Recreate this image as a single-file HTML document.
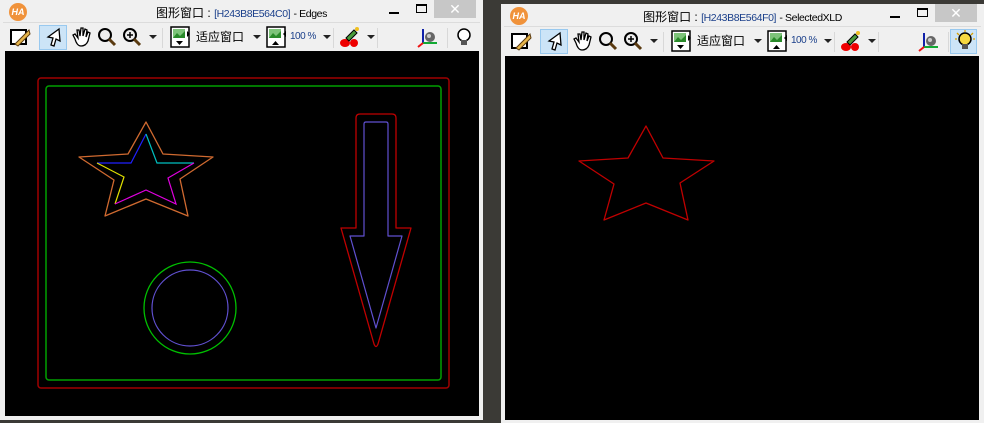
<!DOCTYPE html>
<html><head><meta charset="utf-8"><style>
*{margin:0;padding:0;box-sizing:border-box}
body{width:984px;height:423px;background:#3b3a36;position:relative;overflow:hidden;font-family:"Liberation Sans","Noto Sans CJK SC",sans-serif}
.win{position:absolute;width:483px;height:420px;background:#f0f0f0}
.title{position:absolute;left:0;top:0;width:483px;height:22px;background:#f0f0f0}
.logo{position:absolute;left:9px;top:3px;width:18px;height:18px;border-radius:50%;background:#f0923a;color:#fff;font:bold 9px "Liberation Sans",sans-serif;text-align:center;line-height:18px;font-style:italic}
.ttext{position:absolute;left:0;width:483px;top:4px;text-align:center;font-size:12px;color:#000;white-space:nowrap}
.ttext .c{font-family:"Noto Sans CJK SC",sans-serif}
.ttext .h{color:#1a3f8a;font-size:10.5px;letter-spacing:-0.4px}
.ttext .e{font-size:10.5px;letter-spacing:-0.4px}
.min{position:absolute;left:389px;top:12px;width:10px;height:2px;background:#000}
.max{position:absolute;left:416px;top:4px;width:11px;height:9px;border:1px solid #000;border-top-width:2px}
.close{position:absolute;left:434px;top:0;width:42px;height:18px;background:#c7c7c7;color:#fff;text-align:center;font-size:14px;line-height:18px}
.tb{position:absolute;left:3px;top:22px;width:477px;height:29px;background:#f0f0f0;border-top:1px solid #dcdcdc}
.ic{position:absolute;top:3px}
.sep{position:absolute;top:5px;width:1px;height:20px;background:#d8d8d8}
.dd{position:absolute;top:12px;width:0;height:0;border-left:4px solid transparent;border-right:4px solid transparent;border-top:4px solid #222}
.sel{position:absolute;left:36px;top:2px;width:28px;height:25px;background:#cce4f7;border:1px solid #99c9ef}
.txt{position:absolute;top:6px;font-size:12px;font-family:"Noto Sans CJK SC",sans-serif;line-height:16px}
.pct{position:absolute;top:8px;font-size:10px;letter-spacing:-0.5px;color:#1a3f8a}
.canvas{position:absolute;left:5px;top:51px;width:474px;height:365px;background:#000}
</style></head><body>

<!-- LEFT WINDOW -->
<div class="win" style="left:0;top:0">
 <div class="title">
  <div class="logo">HA</div>
  <div class="ttext"><span class="c">图形窗口</span> : <span class="h">[H243B8E564C0]</span> <span class="e">- Edges</span></div>
  <div class="min"></div><div class="max"></div><div class="close">✕</div>
 </div>
 <div class="tb">
  <svg class="ic" style="left:6px" width="22" height="22" viewBox="0 0 22 22"><rect x="2" y="4" width="15" height="14" fill="#fff" stroke="#000" stroke-width="2"/><path d="M6 18 L20 4 L21 8 L9 20Z" fill="#e8b64a" stroke="#5a3a10"/></svg>
  <div class="sel"></div>
  <svg class="ic" style="left:40px" width="22" height="22" viewBox="0 0 22 22"><path d="M16 3 L5 11 L10 12 L8 19 L11 20 L13 13 L17 15Z" fill="#fff" stroke="#000" stroke-width="1.3"/></svg>
  <svg class="ic" style="left:67px" width="22" height="22" viewBox="0 0 22 22"><path d="M5 13 L3 9 L5 8 L8 12 L7 4 L9 4 L10 10 L11 2 L13 2 L13 10 L15 3 L17 4 L16 11 L18 6 L20 7 L18 15 Q16 20 11 20 Q7 20 5 13Z" fill="#fff" stroke="#000" stroke-width="1.3"/></svg>
  <svg class="ic" style="left:93px" width="22" height="22" viewBox="0 0 22 22"><circle cx="9" cy="9" r="6" fill="#eee" stroke="#000" stroke-width="2"/><path d="M13 13 L19 19" stroke="#5a3a10" stroke-width="3"/></svg>
  <svg class="ic" style="left:118px" width="22" height="22" viewBox="0 0 22 22"><circle cx="9" cy="9" r="6" fill="#eee" stroke="#000" stroke-width="2"/><path d="M6 9H12M9 6V12" stroke="#000" stroke-width="1.5"/><path d="M13 13 L19 19" stroke="#5a3a10" stroke-width="3"/></svg>
  <div class="dd" style="left:146px"></div>
  <div class="sep" style="left:159px"></div>
  <svg class="ic" style="left:167px" width="22" height="22" viewBox="0 0 22 22"><rect x="1" y="1" width="18" height="20" fill="#fff" stroke="#000" stroke-width="1.5"/><rect x="3" y="3" width="12" height="9" fill="#7ec37a"/><path d="M3 12 L7 7 L10 10 L15 5 V12Z" fill="#2a8a2a"/><path d="M17 5 L20 8 L17 11Z" fill="#000"/><path d="M6 15 H13 L9.5 19Z" fill="#000"/></svg>
  <div class="txt" style="left:193px">适应窗口</div>
  <div class="dd" style="left:250px"></div>
  <svg class="ic" style="left:263px" width="22" height="22" viewBox="0 0 22 22"><rect x="1" y="1" width="18" height="20" fill="#fff" stroke="#000" stroke-width="1.5"/><rect x="3" y="3" width="12" height="9" fill="#7ec37a"/><path d="M3 12 L7 7 L10 10 L15 5 V12Z" fill="#2a8a2a"/><path d="M20 5 L17 8 L20 11Z" fill="#000"/><path d="M6 19 H13 L9.5 15Z" fill="#000"/></svg>
  <div class="pct" style="left:287px">100 %</div>
  <div class="dd" style="left:320px"></div>
  <div class="sep" style="left:330px"></div>
  <svg class="ic" style="left:336px" width="22" height="22" viewBox="0 0 22 22"><ellipse cx="6" cy="17" rx="5" ry="4" fill="#e00"/><ellipse cx="15" cy="17" rx="4" ry="4" fill="#e00"/><path d="M7 12 L15 4 L18 7 L10 15Z" fill="#4a9a3a" stroke="#000"/><circle cx="18" cy="3" r="2" fill="#f0c020"/></svg>
  <div class="dd" style="left:364px"></div>
  <div class="sep" style="left:374px"></div>
  <svg class="ic" style="left:414px" width="24" height="22" viewBox="0 0 24 22"><path d="M6 17 V3" stroke="#12a" stroke-width="2"/><path d="M6 17 L20 17" stroke="#1a3" stroke-width="2"/><path d="M6 17 L1 21" stroke="#e11" stroke-width="2"/><circle cx="13" cy="11" r="5" fill="#666"/><circle cx="12" cy="10" r="2" fill="#ccc"/></svg>
  <div class="sep" style="left:444px"></div>
  <svg class="ic" style="left:450px" width="22" height="22" viewBox="0 0 22 22"><circle cx="11" cy="9" r="6" fill="#fff" stroke="#000" stroke-width="1.5"/><rect x="8" y="14" width="6" height="5" fill="#555"/></svg>
 </div>
 <div class="canvas">
  <svg width="474" height="365" viewBox="5 51 474 365" style="display:block">
   <rect x="38" y="78" width="411" height="310" rx="3" fill="none" stroke="#a00000" stroke-width="1.5"/>
   <rect x="46" y="86" width="395" height="294" rx="3" fill="none" stroke="#00a000" stroke-width="1.5"/>
   <path d="M146 122 L163 154 L213 157 L180 179 L188 216 L146 199 L105 216 L114 180 L79 157 L128 154Z" fill="none" stroke="#d06a30" stroke-width="1.3" stroke-linejoin="round"/>
   <path d="M146 134 L131 163 L97 163" fill="none" stroke="#2020ff" stroke-width="1.2"/>
   <path d="M146 134 L157 163 L194 163" fill="none" stroke="#00c0c0" stroke-width="1.2"/>
   <path d="M97 163 L124 177 L115 204" fill="none" stroke="#e0e000" stroke-width="1.2"/>
   <path d="M115 204 L146 190 L176 204 L168 178 L194 163" fill="none" stroke="#e000e0" stroke-width="1.2"/>
   <circle cx="190" cy="308" r="46" fill="none" stroke="#00c000" stroke-width="1.3"/>
   <circle cx="190" cy="308" r="38" fill="none" stroke="#6050d0" stroke-width="1.2"/>
   <path d="M356 118 Q356 114 360 114 H392 Q396 114 396 118 V228 H411 L378 344 Q376 349 374 344 L341 228 H356Z" fill="none" stroke="#c00000" stroke-width="1.3" stroke-linejoin="round"/>
   <path d="M364 124 Q364 122 366 122 H386 Q388 122 388 124 V236 H402 L376 328 L350 236 H364Z" fill="none" stroke="#6050d0" stroke-width="1.2" stroke-linejoin="round"/>
  </svg>
 </div>
</div>

<!-- RIGHT WINDOW -->
<div class="win" style="left:501px;top:4px;height:419px">
 <div class="title">
  <div class="logo">HA</div>
  <div class="ttext"><span class="c">图形窗口</span> : <span class="h">[H243B8E564F0]</span> <span class="e">- SelectedXLD</span></div>
  <div class="min"></div><div class="max"></div><div class="close">✕</div>
 </div>
 <div class="tb">
  <svg class="ic" style="left:6px" width="22" height="22" viewBox="0 0 22 22"><rect x="2" y="4" width="15" height="14" fill="#fff" stroke="#000" stroke-width="2"/><path d="M6 18 L20 4 L21 8 L9 20Z" fill="#e8b64a" stroke="#5a3a10"/></svg>
  <div class="sel"></div>
  <svg class="ic" style="left:40px" width="22" height="22" viewBox="0 0 22 22"><path d="M16 3 L5 11 L10 12 L8 19 L11 20 L13 13 L17 15Z" fill="#fff" stroke="#000" stroke-width="1.3"/></svg>
  <svg class="ic" style="left:67px" width="22" height="22" viewBox="0 0 22 22"><path d="M5 13 L3 9 L5 8 L8 12 L7 4 L9 4 L10 10 L11 2 L13 2 L13 10 L15 3 L17 4 L16 11 L18 6 L20 7 L18 15 Q16 20 11 20 Q7 20 5 13Z" fill="#fff" stroke="#000" stroke-width="1.3"/></svg>
  <svg class="ic" style="left:93px" width="22" height="22" viewBox="0 0 22 22"><circle cx="9" cy="9" r="6" fill="#eee" stroke="#000" stroke-width="2"/><path d="M13 13 L19 19" stroke="#5a3a10" stroke-width="3"/></svg>
  <svg class="ic" style="left:118px" width="22" height="22" viewBox="0 0 22 22"><circle cx="9" cy="9" r="6" fill="#eee" stroke="#000" stroke-width="2"/><path d="M6 9H12M9 6V12" stroke="#000" stroke-width="1.5"/><path d="M13 13 L19 19" stroke="#5a3a10" stroke-width="3"/></svg>
  <div class="dd" style="left:146px"></div>
  <div class="sep" style="left:159px"></div>
  <svg class="ic" style="left:167px" width="22" height="22" viewBox="0 0 22 22"><rect x="1" y="1" width="18" height="20" fill="#fff" stroke="#000" stroke-width="1.5"/><rect x="3" y="3" width="12" height="9" fill="#7ec37a"/><path d="M3 12 L7 7 L10 10 L15 5 V12Z" fill="#2a8a2a"/><path d="M17 5 L20 8 L17 11Z" fill="#000"/><path d="M6 15 H13 L9.5 19Z" fill="#000"/></svg>
  <div class="txt" style="left:193px">适应窗口</div>
  <div class="dd" style="left:250px"></div>
  <svg class="ic" style="left:263px" width="22" height="22" viewBox="0 0 22 22"><rect x="1" y="1" width="18" height="20" fill="#fff" stroke="#000" stroke-width="1.5"/><rect x="3" y="3" width="12" height="9" fill="#7ec37a"/><path d="M3 12 L7 7 L10 10 L15 5 V12Z" fill="#2a8a2a"/><path d="M20 5 L17 8 L20 11Z" fill="#000"/><path d="M6 19 H13 L9.5 15Z" fill="#000"/></svg>
  <div class="pct" style="left:287px">100 %</div>
  <div class="dd" style="left:320px"></div>
  <div class="sep" style="left:330px"></div>
  <svg class="ic" style="left:336px" width="22" height="22" viewBox="0 0 22 22"><ellipse cx="6" cy="17" rx="5" ry="4" fill="#e00"/><ellipse cx="15" cy="17" rx="4" ry="4" fill="#e00"/><path d="M7 12 L15 4 L18 7 L10 15Z" fill="#4a9a3a" stroke="#000"/><circle cx="18" cy="3" r="2" fill="#f0c020"/></svg>
  <div class="dd" style="left:364px"></div>
  <div class="sep" style="left:374px"></div>
  <svg class="ic" style="left:414px" width="24" height="22" viewBox="0 0 24 22"><path d="M6 17 V3" stroke="#12a" stroke-width="2"/><path d="M6 17 L20 17" stroke="#1a3" stroke-width="2"/><path d="M6 17 L1 21" stroke="#e11" stroke-width="2"/><circle cx="13" cy="11" r="5" fill="#666"/><circle cx="12" cy="10" r="2" fill="#ccc"/></svg>
  <div class="sep" style="left:444px"></div>
  <div class="sel" style="left:446px;width:27px"></div>
  <svg class="ic" style="left:450px" width="22" height="22" viewBox="0 0 22 22"><circle cx="11" cy="9" r="6" fill="#f6d840" stroke="#000" stroke-width="1.5"/><rect x="8" y="14" width="6" height="5" fill="#555"/><path d="M11 0V2M3 3L5 5M19 3L17 5M1 9H3M19 9H21" stroke="#d9a000" stroke-width="1.3"/></svg>
 </div>
 <div class="canvas" style="left:4px;top:52px;height:364px">
  <svg width="474" height="364" viewBox="505 56 474 364" style="display:block">
   <path d="M646 126 L663 158 L714 161 L680 183 L688 220 L646 203 L604 220 L614 184 L579 161 L628 158Z" fill="none" stroke="#c00000" stroke-width="1.3" stroke-linejoin="round"/>
  </svg>
 </div>
</div>
</body></html>
